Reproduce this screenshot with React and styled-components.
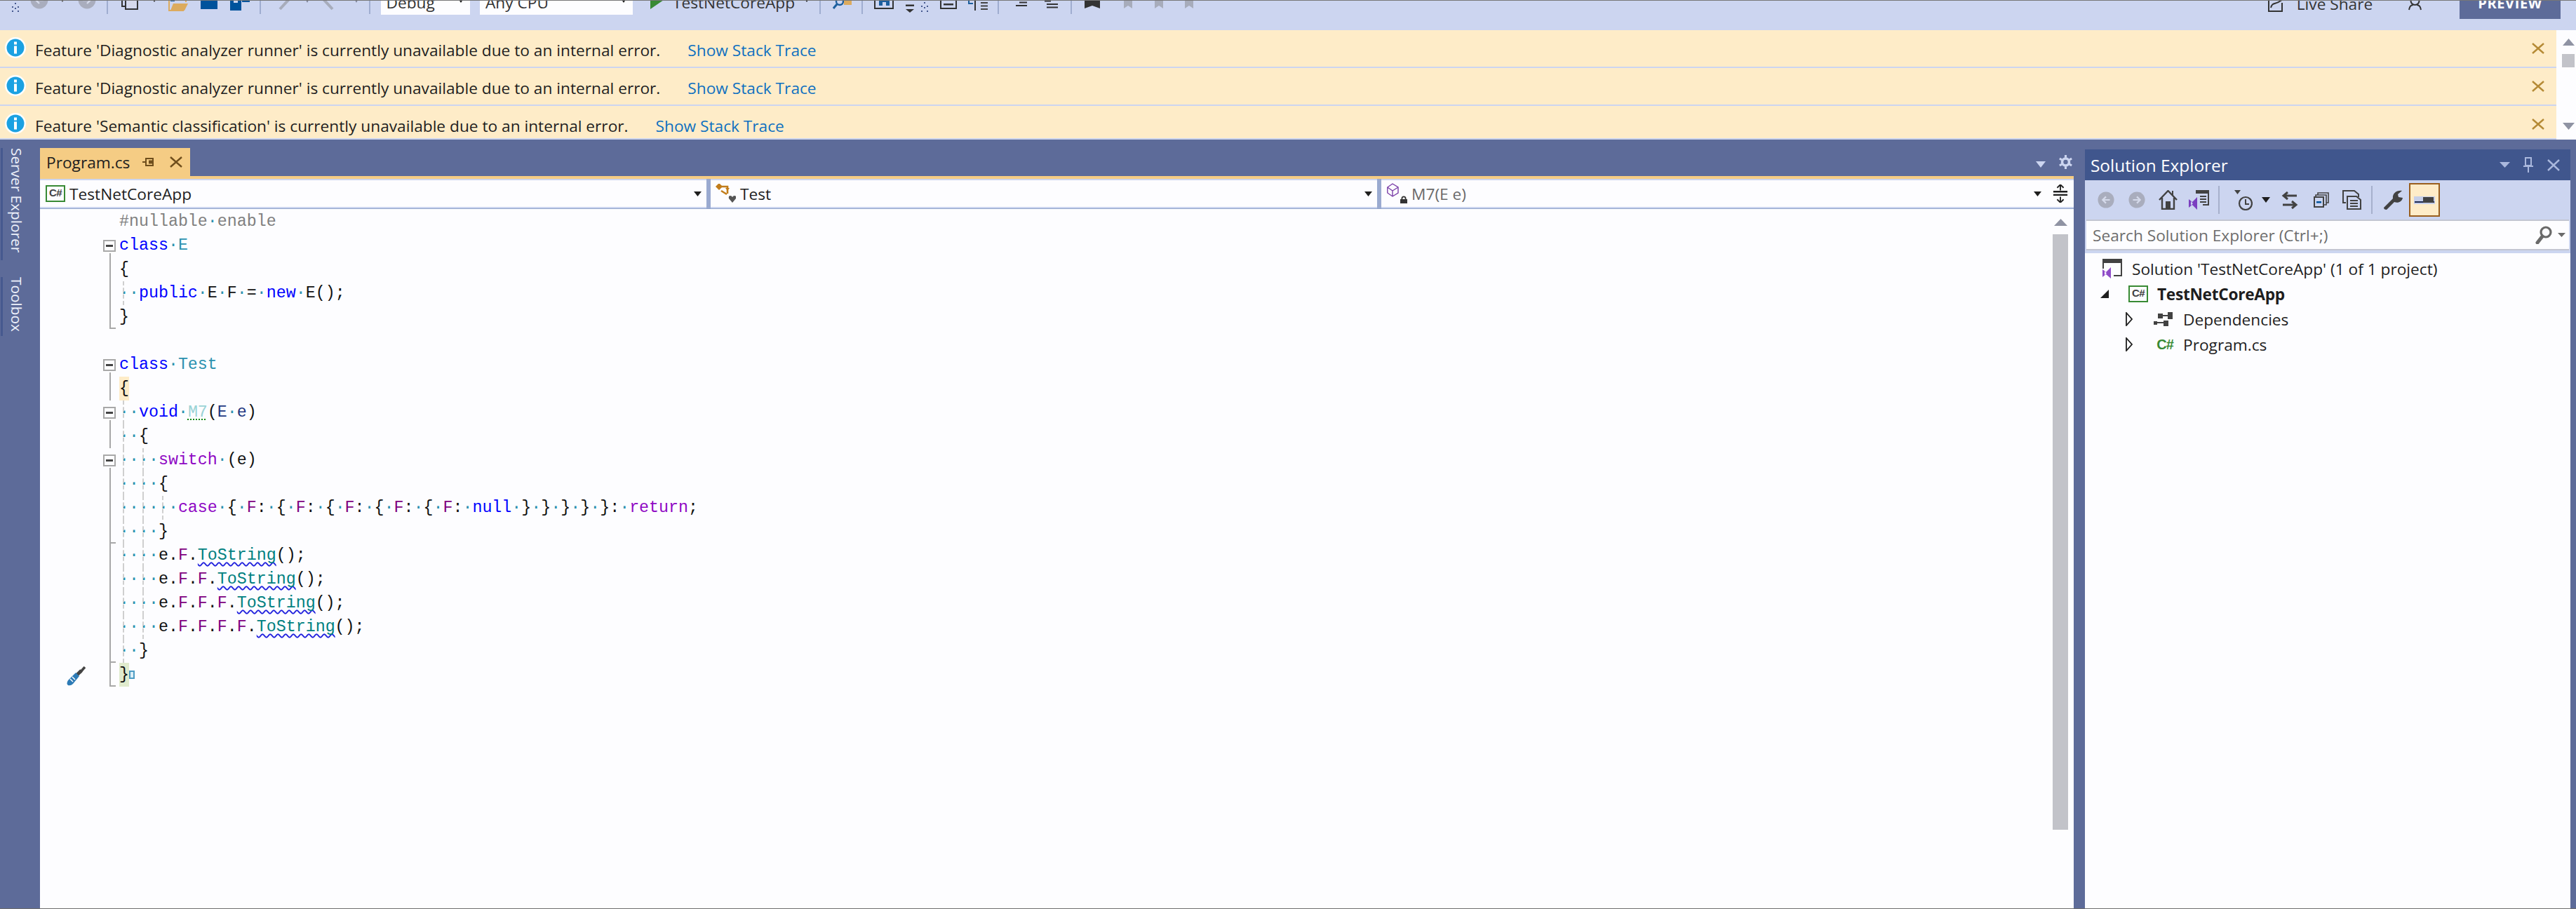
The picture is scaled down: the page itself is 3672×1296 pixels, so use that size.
import React from "react";
import styled, { createGlobalStyle } from "styled-components";

const UI_FONT = `"Open Sans", "Noto Sans", sans-serif`;
const DARK = "#5d6b99";
const LIGHT = "#ccd5f0";
const INFO = "#feecc8";
const PAGE = "#fdfdff";

const GlobalStyle = createGlobalStyle`
  html, body { margin: 0; padding: 0; background: ${PAGE}; overflow: hidden; }
  * { box-sizing: border-box; }
`;

const Root = styled.div`
  width: 3672px;
  height: 1296px;
  display: flex;
  flex-direction: column;
  overflow: hidden;
  font-family: ${UI_FONT};
  font-size: 22.7px;
  color: #1e1e1e;
  border-bottom: 1px solid #6d6d6d;
`;

/* ---------- top toolbar, cut off by the top of the shot ---------- */
const Toolbar = styled.div`
  height: 43px;
  flex: none;
  background: ${LIGHT};
  border-top: 1px solid #777;
  overflow: hidden;
`;
const ToolRow = styled.div`
  height: 42px;
  margin-top: -22px;
  display: flex;
  align-items: center;
`;
const Slot = styled.div`
  flex: none;
  width: ${(p) => p.$w}px;
  margin-left: ${(p) => p.$gap}px;
  display: flex;
  justify-content: center;
  align-items: center;
`;
const ToolSep = styled.div`
  width: 2px;
  height: 40px;
  background: #9fadd0;
`;
const ToolCombo = styled.div`
  width: ${(p) => p.$w}px;
  height: 42px;
  padding: 15px 9px 0 8px;
  background: #fdfdff;
  display: flex;
  align-items: flex-start;
  justify-content: space-between;
  line-height: 20px;
  color: #333;
`;
const ComboCaret = styled.div`
  margin-top: 4px;
  display: flex;
`;
const ToolText = styled.div`
  padding-top: ${(p) => p.$top}px;
  line-height: 20px;
  white-space: nowrap;
  color: #333;
`;
const PreviewBadge = styled.div`
  width: 144px;
  height: 54px;
  padding-top: 22px;
  background: ${DARK};
  color: #fff;
  font-weight: 700;
  letter-spacing: 0.6px;
  font-size: 20px;
  text-align: center;
  line-height: 20px;
`;

/* ---------- info bars ---------- */
const InfoArea = styled.div`
  height: 156px;
  flex: none;
  display: flex;
  background: ${PAGE};
`;
const InfoList = styled.div`
  flex: 1;
  display: flex;
  flex-direction: column;
`;
const InfoRow = styled.div`
  height: ${(p) => p.$h}px;
  flex: none;
  background: ${INFO};
  border-bottom: 2px solid ${LIGHT};
  display: flex;
  align-items: flex-start;
  padding: 10px 16px 0 7px;
`;
const InfoText = styled.div`
  margin-left: 13px;
  margin-top: 6px;
  line-height: 26px;
  white-space: nowrap;
`;
const InfoLink = styled.span`
  margin-left: 39px;
  margin-top: 6px;
  line-height: 26px;
  color: #0e70c0;
  white-space: nowrap;
`;
const InfoClose = styled.div`
  margin-left: auto;
  margin-top: 8px;
  display: flex;
`;
const MiniScroll = styled.div`
  width: 28px;
  flex: none;
  padding: 12px 2px 0 8px;
  display: flex;
  flex-direction: column;
  align-items: center;
`;
const MiniThumb = styled.div`
  width: 18px;
  height: 19px;
  margin: 12px 0 79px;
  background: #c2c3c9;
`;

/* ---------- workspace ---------- */
const Workspace = styled.div`
  flex: 1;
  min-height: 0;
  display: flex;
  background: ${DARK};
`;
const SideRail = styled.div`
  width: 57px;
  flex: none;
  padding-top: 12px;
  display: flex;
  flex-direction: column;
  align-items: flex-start;
  gap: 24px;
`;
const RailTab = styled.div`
  writing-mode: vertical-rl;
  height: ${(p) => p.$h}px;
  margin-left: 1px;
  border-left: 3px solid #46598f;
  padding-left: 7px;
  color: #eef1fb;
  font-size: 20.8px;
  line-height: 26px;
  white-space: nowrap;
`;
const EditorPanel = styled.div`
  width: 2899px;
  flex: none;
  padding-top: 12px;
  display: flex;
  flex-direction: column;
`;
const TabStrip = styled.div`
  height: 40px;
  flex: none;
  display: flex;
  align-items: stretch;
`;
const DocTab = styled.div`
  width: 214px;
  background: #f5cc84;
  padding-left: 9px;
  display: flex;
  align-items: center;
  color: #1e1e1e;
`;
const DocName = styled.span`
  width: 137px;
`;
const TabClose = styled.div`
  margin-left: 22px;
  display: flex;
`;
const TabTools = styled.div`
  margin-left: auto;
  padding-right: 1px;
  display: flex;
  align-items: center;
  gap: 18px;
`;
const TabCaret = styled.div`
  margin-top: 6px;
  display: flex;
`;
const AccentStrip = styled.div`
  height: 4px;
  flex: none;
  background: #f5cc84;
`;
const NavBar = styled.div`
  height: 43px;
  flex: none;
  display: flex;
  background: ${LIGHT};
  border-bottom: 1px solid #8fa3c9;
`;
const NavCombo = styled.div`
  width: ${(p) => p.$w}px;
  flex: none;
  margin: 2px 0;
  padding: 0 7px 0 ${(p) => p.$pad}px;
  background: ${PAGE};
  display: flex;
  align-items: center;
  color: ${(p) => p.$muted ? "#6a6a6a" : "#1e1e1e"};
`;
const NavLabel = styled.span`
  margin-left: ${(p) => p.$gap}px;
  margin-right: auto;
`;
const NavSep = styled.div`
  width: 6px;
  flex: none;
  background: #9aaad0;
`;
const NavSplit = styled.div`
  flex: 1;
  margin: 2px 0;
  background: ${PAGE};
  display: flex;
  align-items: center;
  justify-content: center;
`;
const EditorBody = styled.div`
  flex: 1;
  min-height: 0;
  display: flex;
  background: ${PAGE};
`;
const CodeArea = styled.div`
  flex: 1;
  padding-top: 1px;
`;
const EditorScroll = styled.div`
  width: 39px;
  flex: none;
  padding: 14px 8px 0 9px;
  display: flex;
  flex-direction: column;
  align-items: center;
`;
const EditorThumb = styled.div`
  width: 22px;
  height: 849px;
  margin-top: 12px;
  background: #c2c3c9;
`;

/* code lines */
const CodeLine = styled.div`
  height: 34px;
  display: flex;
  position: relative;
`;
const GlyphCell = styled.div`
  width: 90px;
  flex: none;
  display: flex;
  justify-content: flex-end;
  padding: 5px 25px 0 0;
`;
const FoldCell = styled.div`
  width: 23px;
  flex: none;
  position: relative;
`;
const FoldBox = styled.div`
  position: absolute;
  left: 0;
  top: 9px;
  width: 18px;
  height: 17px;
  border: 2px solid #a8a8a8;
  background: ${PAGE};
  &::after {
    content: "";
    position: absolute;
    left: 2px;
    right: 2px;
    top: 5px;
    height: 3px;
    background: #444;
  }
`;
const FoldLine = styled.div`
  position: absolute;
  left: 9px;
  top: ${(p) => p.$top}px;
  bottom: ${(p) => p.$bottom}px;
  width: 2px;
  background: #a8a8a8;
`;
const FoldFoot = styled.div`
  position: absolute;
  left: 9px;
  top: 32px;
  width: 9px;
  height: 2px;
  background: #a8a8a8;
`;
const CodeText = styled.div`
  font-family: "Liberation Mono", monospace;
  font-size: 23.3px;
  line-height: 34px;
  white-space: pre;
  color: #111;
`;
const GuideMark = styled.div`
  position: absolute;
  left: ${(p) => 118 + p.$col * 14}px;
  top: 0;
  height: 34px;
  border-left: 2px dashed #cfcfcf;
`;
const TOKEN_COLORS = {
  k: "#0000ff",
  c: "#8f08c4",
  t: "#2b91af",
  d: "#2b91af",
  g: "#808080",
  p: "#800080",
  m: "#008080",
  a: "#1f377f",
  f: "#9bd3d6",
  x: "#111111",
};
const Tok = styled.span`
  color: ${(p) => TOKEN_COLORS[p.$k]};
  ${(p) => p.$wavy ? "text-decoration: underline wavy #2222dd 1.5px; text-underline-offset: 3px; text-decoration-skip-ink: none;" : ""}
  ${(p) => p.$k === "f" ? "text-decoration: underline dotted #118811 2px; text-underline-offset: 3px; text-decoration-skip-ink: none;" : ""}
`;
const BraceMark = styled.span`
  display: inline-block;
  height: 34px;
  background: ${(p) => p.$bg};
`;
const EndMark = styled.span`
  display: inline-block;
  width: 8px;
  height: 12px;
  vertical-align: 0;
  border: 2px solid #4d9cc4;
  background: #dceef6;
`;

/* ---------- solution explorer ---------- */
const SolutionPanel = styled.div`
  width: 692px;
  flex: none;
  margin: 14px 8px 0 16px;
  display: flex;
  flex-direction: column;
  background: ${PAGE};
`;
const PanelTitle = styled.div`
  height: 44px;
  flex: none;
  background: #40568d;
  color: #fff;
  display: flex;
  align-items: center;
  padding: 0 14px 0 8px;
  font-size: 24.4px;
`;
const TitleTools = styled.div`
  margin-left: auto;
  display: flex;
  align-items: center;
  gap: 19px;
`;
const PanelBar = styled.div`
  height: 56px;
  flex: none;
  background: ${LIGHT};
  display: flex;
  align-items: center;
`;
const BarSep = styled.div`
  width: 2px;
  height: 40px;
  background: #a6b0cc;
`;
const ActiveTool = styled.div`
  width: 44px;
  height: 48px;
  border: 2px solid #9a5f1e;
  background: ${INFO};
  display: flex;
  align-items: center;
  justify-content: center;
`;
const SearchWrap = styled.div`
  height: 48px;
  flex: none;
  background: ${LIGHT};
  padding: 0 2px 4px;
`;
const SearchBox = styled.div`
  height: 44px;
  background: ${PAGE};
  border-top: 2px solid #c3c6d2;
  border-bottom: 2px solid #c3c6d2;
  display: flex;
  align-items: center;
  padding: 0 5px 0 9px;
  color: #6d6d6d;
`;
const SearchIcons = styled.div`
  margin-left: auto;
  display: flex;
  align-items: center;
  gap: 7px;
`;
const Tree = styled.div`
  padding-top: 4px;
  display: flex;
  flex-direction: column;
`;
const TreeRow = styled.div`
  height: 36px;
  display: flex;
  align-items: center;
  padding-left: ${(p) => p.$pad}px;
  font-weight: ${(p) => p.$bold ? 700 : 400};
  letter-spacing: ${(p) => p.$bold ? "-0.3px" : "0"};
  white-space: nowrap;
`;
const TreeIcon = styled.div`
  width: ${(p) => p.$w}px;
  margin-left: ${(p) => p.$gap || 0}px;
  flex: none;
  display: flex;
  align-items: center;
  justify-content: center;
`;
const TreeLabel = styled.span`
  margin-left: ${(p) => p.$gap}px;
`;
const CsBox = styled.div`
  width: ${(p) => p.$size}px;
  margin-left: ${(p) => p.$gap || 0}px;
  height: 24px;
  flex: none;
  border: 2px solid #388a34;
  background: ${PAGE};
  color: #424242;
  font-family: "Liberation Sans", sans-serif;
  font-size: 15px;
  font-weight: 700;
  letter-spacing: -0.5px;
  line-height: 18px;
  text-align: center;
`;
const CsPlain = styled.span`
  color: #388a34;
  font-family: "Liberation Sans", sans-serif;
  font-size: 20px;
  font-weight: 700;
  letter-spacing: -1px;
`;

/* ---------- icons ---------- */
const CloseX = ({ color = "#b58a35", w = 20, h = 16 }) => (
  <svg width={w} height={h} viewBox="0 0 20 16" preserveAspectRatio="none">
    <path d="M2 1 L18 15 M18 1 L2 15" stroke={color} strokeWidth="2.4" fill="none" />
  </svg>
);
const InfoIcon = () => (
  <svg width="30" height="30" viewBox="0 0 30 30">
    <circle cx="15" cy="15" r="15" fill="#fff" />
    <circle cx="15" cy="15" r="12.5" fill="#1ba1e2" />
    <rect x="13" y="12.5" width="4" height="11" fill="#fff" />
    <rect x="13" y="6.5" width="4" height="4" fill="#fff" />
  </svg>
);
const Caret = ({ dir = "down", color = "#1e1e1e", w = 12, h = 8 }) => (
  <svg width={w} height={h} viewBox="0 0 12 8" preserveAspectRatio="none">
    <path d={dir === "down" ? "M0 0 H12 L6 8 Z" : "M0 8 H12 L6 0 Z"} fill={color} />
  </svg>
);
const NavCircle = ({ flip, size = 26, color = "#a9adbd" }) => (
  <svg width={size} height={size} viewBox="0 0 26 26">
    <circle cx="13" cy="13" r="12.5" fill={color} />
    <path d={flip ? "M7 13h11M13 8l5 5-5 5" : "M19 13H8M13 8l-5 5 5 5"} stroke="#d5daea" strokeWidth="2.4" fill="none" />
  </svg>
);

// toolbar drawings: the row is centred on y=0, so the viewBox uses screen y directly
const TB = ({ w, children }) => (
  <svg width={w} height="42" viewBox={`0 -21 ${w} 42`}>{children}</svg>
);
const Grip = () => (
  <TB w={10}><path d="M4 4h2v2H4zM0 9h2v2H0zM8 9h2v2H8zM4 11h2v2H4zM0 15h2v2H0zM8 15h2v2H8z" fill="#46598f" /></TB>
);
const NewDoc = () => (
  <TB w={24}>
    <rect x="6" y="-8" width="17" height="21" fill={LIGHT} stroke="#333" strokeWidth="2" />
    <rect x="8" y="-6" width="13" height="17" fill="#d5d9ec" />
    <path d="M1 -6V9H5" stroke="#333" strokeWidth="2" fill="none" />
  </TB>
);
const Folder = () => (
  <TB w={28}>
    <path d="M1 -4V15H22" stroke="#dcab5e" strokeWidth="2" fill="none" />
    <path d="M25 -4V3" stroke="#dcab5e" strokeWidth="2" />
    <path d="M3 -2h6v4H3z" fill="#1c5f9e" />
    <path d="M3 15 7 5H28L23 15Z" fill="#dcab5e" />
  </TB>
);
const Save = () => (
  <TB w={24}><rect x="0" y="-14" width="24" height="27" fill="#00539c" /></TB>
);
const SaveAll = () => (
  <TB w={28}>
    <rect x="0" y="-14" width="16" height="29" fill="#00539c" />
    <rect x="17" y="-14" width="11" height="17" fill="#00539c" />
    <rect x="5" y="-2" width="6" height="6" fill={LIGHT} />
  </TB>
);
const ArrowLine = ({ flip }) => (
  <TB w={16}>
    <path d={flip ? "M15 -1 L2 13" : "M1 -1 L14 13"} stroke="#a7acbb" strokeWidth="4" fill="none" />
  </TB>
);
const Play = () => (
  <TB w={19}><path d="M0 -14 L19 0 L0 13Z" fill="#388a34" /></TB>
);
const FindIcon = () => (
  <TB w={28}>
    <circle cx="10" cy="2" r="5" stroke="#1c5f9e" strokeWidth="2.4" fill="none" />
    <path d="M6 6 L1 12" stroke="#1c5f9e" strokeWidth="3" />
    <rect x="16" y="1" width="11" height="6" fill="#dcab5e" />
  </TB>
);
const BoxTool = () => (
  <TB w={28}>
    <path d="M1 -10V12H27V-10" stroke="#333" strokeWidth="2" fill="none" />
    <path d="M7 -10H22V8H17V3H12V8H7Z" fill="#1c5f9e" />
  </TB>
);
const MinusDown = () => (
  <TB w={12}>
    <rect x="0" y="6.5" width="12" height="2.5" fill="#333" />
    <path d="M0 13h12l-6 5z" fill="#333" />
  </TB>
);
const Dots = () => (
  <TB w={10}><path d="M4 3h2v2H4zM0 8h2v2H0zM8 8h2v2H8zM4 10h2v2H4zM0 15h2v2H0zM8 15h2v2H8z" fill="#46598f" /></TB>
);
const BoxMinus = () => (
  <TB w={24}>
    <path d="M1 -10V12H23V-10" stroke="#333" strokeWidth="2" fill="none" />
    <rect x="5" y="5" width="14" height="2.5" fill="#333" />
  </TB>
);
const OutlineList = () => (
  <TB w={28}>
    <path d="M1 -5V5H7" stroke="#1c5f9e" strokeWidth="2.2" fill="none" />
    <path d="M10 -5V15" stroke="#333" strokeWidth="2" />
    <path d="M18 4H28M18 8.5H28M18 13H28" stroke="#444" strokeWidth="2" />
  </TB>
);
const IndentLeft = () => (
  <TB w={16}><path d="M5 3.5H16M0 8H16" stroke="#333" strokeWidth="2.2" /></TB>
);
const IndentRight = () => (
  <TB w={19}><path d="M0 1.5H9M3 6H19M3 10.5H19" stroke="#333" strokeWidth="2.2" /></TB>
);
const Bookmark = ({ color, w }) => (
  <TB w={w}><path d={`M0 -14H${w}V12L${w / 2} 8 0 12Z`} fill={color} /></TB>
);
const ShareIcon = () => (
  <TB w={24}>
    <path d="M1 -4V16H20V4" stroke="#333" strokeWidth="2" fill="none" />
    <path d="M4 11 C7 1 11 9 23 -3" stroke="#333" strokeWidth="2" fill="none" />
  </TB>
);
const PersonIcon = () => (
  <TB w={19}>
    <circle cx="9.5" cy="1" r="6" stroke="#333" strokeWidth="2" fill="none" />
    <path d="M1 14 Q2 7 7 7 M18 14 Q17 7 12 7" stroke="#333" strokeWidth="2" fill="none" />
  </TB>
);

const PinSide = () => (
  <svg width="16" height="14" viewBox="0 0 16 14">
    <path d="M0 7h5M5 1v12M5 2h10v10H5" stroke="#6f4e1c" strokeWidth="2" fill="none" />
    <rect x="9" y="4.5" width="6" height="5" fill="#6f4e1c" />
  </svg>
);
const PinUp = () => (
  <svg width="14" height="22" viewBox="0 0 14 22">
    <path d="M3 1h8v11H3zM0 13h14M7 13v9" stroke="#aab8dd" strokeWidth="2" fill="none" />
  </svg>
);
const Gear = () => (
  <svg width="21" height="20" viewBox="0 0 22 22">
    <circle cx="11" cy="11" r="5.5" stroke={LIGHT} strokeWidth="4" fill="none" />
    <path d="M11 0v4M11 18v4M1.5 5.5l3.5 2M17 14.5l3.5 2M1.5 16.5l3.5-2M17 7.5l3.5-2" stroke={LIGHT} strokeWidth="3.4" />
  </svg>
);
const SplitIcon = () => (
  <svg width="22" height="26" viewBox="0 0 24 28">
    <path d="M12 0v9M12 19v9M7 5l5-5 5 5M7 23l5 5 5-5" stroke="#1e1e1e" strokeWidth="2" fill="none" />
    <path d="M1 11h22M1 16h22" stroke="#1e1e1e" strokeWidth="2.6" />
  </svg>
);
const MembersIcon = () => (
  <svg width="30" height="28" viewBox="0 0 30 28">
    <path d="M6 -1 11 4 6 9 1 4Z" fill="#c27d1a" />
    <path d="M8 4H18V14M9 10 17 15" stroke="#c27d1a" strokeWidth="2.6" fill="none" />
    <path d="M15 6h6l-3 4z" fill="#c27d1a" />
    <path d="M25 27 L20 21 Q19 17 22 17 Q24 17 25 19 Q26 17 28 17 Q31 17 30 21Z" fill="#555" />
  </svg>
);
const MethodIcon = () => (
  <svg width="34" height="40" viewBox="0 0 34 40">
    <path d="M8 6 16 11V19L8 24 0.8 19V11Z M0.8 11 8 16 16 11 M8 16V24" stroke="#7b3fa8" strokeWidth="1.4" fill="none" />
    <path d="M20.5 27a3.5 3.5 0 0 1 7 0v2h-1.8v-2a1.7 1.7 0 0 0-3.4 0v2h-1.8z" fill="#333" />
    <rect x="19" y="28" width="10" height="6" fill="#333" />
  </svg>
);
const Screwdriver = () => (
  <svg width="28" height="28" viewBox="0 0 28 28">
    <path d="M27 1 L20 9" stroke="#444" strokeWidth="3.6" />
    <path d="M22 6 L15 13" stroke="#444" strokeWidth="5" />
    <path d="M14 9 L3 20 Q0 25 3 27 Q7 28 10 25 L19 14Z" fill="#2d7bb6" />
    <path d="M6 18l4 4M9 15l4 4" stroke="#fff" strokeWidth="1.5" />
  </svg>
);
const HomeIcon = () => (
  <svg width="27" height="28" viewBox="0 0 27 28">
    <path d="M1 14 13.5 1 26 14M5 11v16h17V11" stroke="#424242" strokeWidth="2.4" fill="none" />
    <rect x="10" y="16" width="7" height="11" fill="#424242" />
    <path d="M20 1v7" stroke="#424242" strokeWidth="2" />
  </svg>
);
const VsDocIcon = () => (
  <svg width="29" height="28" viewBox="0 0 29 28">
    <path d="M10 1h18v20H20" stroke="#424242" strokeWidth="2" fill="none" />
    <rect x="10" y="0" width="18" height="5" fill="#424242" />
    <path d="M16 9h9M16 13h9M16 17h9" stroke="#424242" strokeWidth="2" />
    <path d="M0 13l5 4 7-7v18l-7-7-5 4z M3 16v6l3-3z" fill="#7b3fc0" fillRule="evenodd" />
  </svg>
);
const HistoryIcon = () => (
  <svg width="26" height="29" viewBox="0 0 26 29">
    <path d="M0 0h9L4.500 6z" fill="#424242" />
    <circle cx="16" cy="19" r="9" stroke="#424242" strokeWidth="2.2" fill="none" />
    <path d="M16 13v7h5" stroke="#424242" strokeWidth="2" fill="none" />
  </svg>
);
const SyncIcon = () => (
  <svg width="25" height="25" viewBox="0 0 25 25">
    <path d="M22 6H4M9 1 3 6l6 5" stroke="#424242" strokeWidth="3" fill="none" />
    <path d="M2 19h18M15 14l6 5-6 5" stroke="#424242" strokeWidth="3" fill="none" />
  </svg>
);
const CollapseIcon = () => (
  <svg width="22" height="22" viewBox="0 0 22 22">
    <path d="M6 4V1h15v14h-3M3 7V4h15v14h-3" stroke="#424242" strokeWidth="1.6" fill="none" />
    <rect x="1" y="7" width="13" height="14" stroke="#424242" strokeWidth="2" fill={LIGHT} />
    <rect x="4" y="13" width="7" height="2.5" fill="#00539c" />
  </svg>
);
const CopyIcon = () => (
  <svg width="27" height="28" viewBox="0 0 27 28">
    <path d="M5 18H1V1h16l6 5v4" stroke="#424242" strokeWidth="2" fill="none" />
    <path d="M7 9h13l6 5v13H7z" stroke="#424242" strokeWidth="2" fill={LIGHT} />
    <path d="M11 15h11M11 19h11M11 23h11" stroke="#424242" strokeWidth="2" />
  </svg>
);
const WrenchIcon = () => (
  <svg width="28" height="28" viewBox="0 0 28 28">
    <path d="M0 25 13 12C12 5 18 0 26 1L20 6l1 4 6 1C26 17 20 19 15 17L4 28Q0 28 0 25Z" fill="#424242" />
  </svg>
);
const SyncedIcon = () => (
  <svg width="30" height="11" viewBox="0 0 30 11">
    <rect x="0" y="0" width="30" height="11" fill="#c6cfe9" />
    <rect x="1" y="7" width="28" height="2" fill="#1e2a50" />
    <rect x="13" y="1" width="15" height="8" fill="#424242" />
  </svg>
);
const Magnifier = () => (
  <svg width="25" height="26" viewBox="0 0 25 26">
    <circle cx="15" cy="9" r="7" stroke="#6a6a6a" strokeWidth="3.2" fill="none" />
    <path d="M10 15 3 24" stroke="#6a6a6a" strokeWidth="5" strokeLinecap="round" />
  </svg>
);
const SolutionIcon = () => (
  <svg width="28" height="28" viewBox="0 0 28 28">
    <path d="M1 2h26v22H16" stroke="#424242" strokeWidth="2" fill="none" />
    <rect x="0" y="0" width="28" height="6" fill="#424242" />
    <path d="M1 6v8" stroke="#424242" strokeWidth="2" />
    <path d="M0 15l5 4 7-7v16l-7-6-5 4z M3 18v5l3-2.500z" fill="#8f4cc8" fillRule="evenodd" />
  </svg>
);
const TreeArrow = ({ open }) => open ? (
  <svg width="12" height="12" viewBox="0 0 12 12"><path d="M12 0V12H0Z" fill="#1e1e1e" /></svg>
) : (
  <svg width="10" height="20" viewBox="0 0 10 20"><path d="M1 1 9 10 1 19Z" stroke="#1e1e1e" strokeWidth="1.8" fill="none" /></svg>
);
const DependencyIcon = () => (
  <svg width="28" height="20" viewBox="0 0 28 20">
    <path d="M6 2h7v7H6zM20 0h7v10h-7zM0 13h5v5H0zM14 12h7v8h-7z" fill="#424242" />
    <path d="M13 5h7M5 15h9" stroke="#424242" strokeWidth="2" />
  </svg>
);

/* gives each item the left gap that puts its centre on a given x */
const layoutByCentre = (items, start = 0) => {
  let cursor = start;
  return items.map(([centre, width, node]) => {
    const gap = centre - width / 2 - cursor;
    cursor = centre + width / 2;
    return { width, gap, node };
  });
};

const toolItems = [
  [22, 10, <Grip />],
  [56, 26, <NavCircle />],
  [89, 8, <Caret w={8} h={6} color="#555" />],
  [124, 26, <NavCircle flip />],
  [153, 2, <ToolSep />],
  [185, 24, <NewDoc />],
  [220, 8, <Caret w={8} h={6} color="#333" />],
  [254, 28, <Folder />],
  [298, 24, <Save />],
  [342, 28, <SaveAll />],
  [371, 2, <ToolSep />],
  [405, 16, <ArrowLine flip />],
  [438, 8, <Caret w={8} h={8} color="#7d8396" />],
  [468, 16, <ArrowLine />],
  [508, 8, <Caret w={8} h={8} color="#7d8396" />],
  [527, 2, <ToolSep />],
  [606, 127, <ToolCombo $w={127}><span>Debug</span><ComboCaret><Caret w={8} h={6} /></ComboCaret></ToolCombo>],
  [793, 218, <ToolCombo $w={218}><span>Any CPU</span><ComboCaret><Caret w={8} h={6} /></ComboCaret></ToolCombo>],
  [936, 19, <Play />],
  [1046, 176, <ToolText $top={7}>TestNetCoreApp</ToolText>],
  [1150, 8, <Caret w={8} h={6} />],
  [1169, 2, <ToolSep />],
  [1201, 28, <FindIcon />],
  [1229, 2, <ToolSep />],
  [1260, 28, <BoxTool />],
  [1297, 12, <MinusDown />],
  [1318, 10, <Dots />],
  [1352, 24, <BoxMinus />],
  [1394, 28, <OutlineList />],
  [1423, 2, <ToolSep />],
  [1456, 16, <IndentLeft />],
  [1498.5, 19, <IndentRight />],
  [1527, 2, <ToolSep />],
  [1557, 22, <Bookmark color="#333" w={22} />],
  [1608, 12, <Bookmark color="#a7acbb" w={12} />],
  [1652, 12, <Bookmark color="#a7acbb" w={12} />],
  [1695, 12, <Bookmark color="#a7acbb" w={12} />],
  [3245, 24, <ShareIcon />],
  [3328, 110, <ToolText $top={12}>Live Share</ToolText>],
  [3442.5, 19, <PersonIcon />],
  [3578, 144, <PreviewBadge>PREVIEW</PreviewBadge>],
];

const PANEL_LEFT = 2972;
const panelItems = [
  [3002, 24, <NavCircle size={24} />],
  [3046, 24, <NavCircle flip size={24} />],
  [3090, 27, <HomeIcon />],
  [3134, 29, <VsDocIcon />],
  [3163, 2, <BarSep />],
  [3198, 26, <HistoryIcon />],
  [3230, 12, <Caret />],
  [3264, 25, <SyncIcon />],
  [3309, 22, <CollapseIcon />],
  [3352, 27, <CopyIcon />],
  [3381, 2, <BarSep />],
  [3412, 28, <WrenchIcon />],
  [3456, 44, <ActiveTool><SyncedIcon /></ActiveTool>],
];

const infoBars = [
  { h: 54, text: "Feature 'Diagnostic analyzer runner' is currently unavailable due to an internal error." },
  { h: 54, text: "Feature 'Diagnostic analyzer runner' is currently unavailable due to an internal error." },
  { h: 48, text: "Feature 'Semantic classification' is currently unavailable due to an internal error." },
];

const dots = (n) => "·".repeat(n);
const eLine = (depth) => {
  const parts = [["d", dots(4)], ["x", "e."]];
  for (let i = 0; i < depth; i++) parts.push(["p", "F"], ["x", "."]);
  parts.push(["m", "ToString", true], ["x", "();"]);
  return parts;
};
const caseParts = [["d", dots(6)], ["c", "case"], ["d", "·"]];
for (let i = 0; i < 5; i++) caseParts.push(["x", "{"], ["d", "·"], ["p", "F"], ["x", ":"], ["d", "·"]);
caseParts.push(["k", "null"], ["d", "·"]);
for (let i = 0; i < 4; i++) caseParts.push(["x", "}"], ["d", "·"]);
caseParts.push(["x", "}:"], ["d", "·"], ["c", "return"], ["x", ";"]);

// fold: box = collapse square, line = running bar, end = bar stopping in a foot, tick = bar with a foot
const codeLines = [
  { parts: [["g", "#nullable"], ["d", "·"], ["g", "enable"]] },
  { fold: "box", parts: [["k", "class"], ["d", "·"], ["t", "E"]] },
  { fold: "line", parts: [["x", "{"]] },
  { fold: "line", guides: [0], parts: [["d", "··"], ["k", "public"], ["d", "·"], ["x", "E"], ["d", "·"], ["x", "F"], ["d", "·"], ["x", "="], ["d", "·"], ["k", "new"], ["d", "·"], ["x", "E();"]] },
  { fold: "end", parts: [["x", "}"]] },
  { parts: [] },
  { fold: "box", parts: [["k", "class"], ["d", "·"], ["t", "Test"]] },
  { fold: "line", mark: "#feecc8", parts: [["x", "{"]] },
  { fold: "box", guides: [0], parts: [["d", "··"], ["k", "void"], ["d", "·"], ["f", "M7"], ["x", "("], ["a", "E"], ["d", "·"], ["a", "e"], ["x", ")"]] },
  { fold: "line", guides: [0], parts: [["d", "··"], ["x", "{"]] },
  { fold: "box", guides: [0, 2], parts: [["d", dots(4)], ["c", "switch"], ["d", "·"], ["x", "(e)"]] },
  { fold: "line", guides: [0, 2], parts: [["d", dots(4)], ["x", "{"]] },
  { fold: "line", guides: [0, 2, 4], parts: caseParts },
  { fold: "tick", guides: [0, 2], parts: [["d", dots(4)], ["x", "}"]] },
  { fold: "line", guides: [0, 2], parts: eLine(1) },
  { fold: "line", guides: [0, 2], parts: eLine(2) },
  { fold: "line", guides: [0, 2], parts: eLine(3) },
  { fold: "line", guides: [0, 2], parts: eLine(4) },
  { fold: "tick", guides: [0], parts: [["d", "··"], ["x", "}"]] },
  { fold: "end", mark: "#e0ebcd", glyph: true, end: true, parts: [["x", "}"]] },
];

const FoldMark = ({ kind }) => {
  if (kind === "box") return (
    <>
      <FoldLine $top={28} $bottom={0} />
      <FoldBox />
    </>
  );
  if (kind === "line") return <FoldLine $top={0} $bottom={0} />;
  if (kind === "end") return (
    <>
      <FoldLine $top={0} $bottom={0} />
      <FoldFoot />
    </>
  );
  if (kind === "tick") return (
    <>
      <FoldLine $top={0} $bottom={0} />
      <FoldFoot />
    </>
  );
  return null;
};

const Line = ({ line }) => (
  <CodeLine>
    <GlyphCell>{line.glyph && <Screwdriver />}</GlyphCell>
    <FoldCell><FoldMark kind={line.fold} /></FoldCell>
    <CodeText>
      {line.mark
        ? <BraceMark $bg={line.mark}>{line.parts[0][1]}</BraceMark>
        : line.parts.map(([k, t, wavy], i) => <Tok key={i} $k={k} $wavy={wavy}>{t}</Tok>)}
      {line.end && <EndMark />}
    </CodeText>
    {(line.guides || []).map((g) => <GuideMark key={g} $col={g} />)}
  </CodeLine>
);

export default function App() {
  return (
    <Root>
      <GlobalStyle />
      <Toolbar>
        <ToolRow>
          {layoutByCentre(toolItems).map((it, i) => (
            <Slot key={i} $w={it.width} $gap={it.gap}>{it.node}</Slot>
          ))}
        </ToolRow>
      </Toolbar>

      <InfoArea>
        <InfoList>
          {infoBars.map((bar, i) => (
            <InfoRow key={i} $h={bar.h}>
              <InfoIcon />
              <InfoText>{bar.text}</InfoText>
              <InfoLink>Show Stack Trace</InfoLink>
              <InfoClose><CloseX /></InfoClose>
            </InfoRow>
          ))}
        </InfoList>
        <MiniScroll>
          <Caret dir="up" color="#8f93a3" w={17} h={10} />
          <MiniThumb />
          <Caret color="#8f93a3" w={17} h={10} />
        </MiniScroll>
      </InfoArea>

      <Workspace>
        <SideRail>
          <RailTab $h={160}>Server Explorer</RailTab>
          <RailTab $h={84}>Toolbox</RailTab>
        </SideRail>

        <EditorPanel>
          <TabStrip>
            <DocTab>
              <DocName>Program.cs</DocName>
              <PinSide />
              <TabClose><CloseX color="#6f4e1c" /></TabClose>
            </DocTab>
            <TabTools>
              <TabCaret><Caret color={LIGHT} w={14} h={9} /></TabCaret>
              <Gear />
            </TabTools>
          </TabStrip>
          <AccentStrip />
          <NavBar>
            <NavCombo $w={950} $pad={8}>
              <CsBox $size={28}>C#</CsBox>
              <NavLabel $gap={6}>TestNetCoreApp</NavLabel>
              <Caret w={11} h={7} />
            </NavCombo>
            <NavSep />
            <NavCombo $w={950} $pad={6}>
              <MembersIcon />
              <NavLabel $gap={6}>Test</NavLabel>
              <Caret w={11} h={7} />
            </NavCombo>
            <NavSep />
            <NavCombo $w={948} $pad={8} $muted>
              <MethodIcon />
              <NavLabel $gap={1}>M7(E e)</NavLabel>
              <Caret w={11} h={7} />
            </NavCombo>
            <NavSplit><SplitIcon /></NavSplit>
          </NavBar>
          <EditorBody>
            <CodeArea>
              {codeLines.map((line, i) => <Line key={i} line={line} />)}
            </CodeArea>
            <EditorScroll>
              <Caret dir="up" color="#8f93a3" w={19} h={10} />
              <EditorThumb />
            </EditorScroll>
          </EditorBody>
        </EditorPanel>

        <SolutionPanel>
          <PanelTitle>
            Solution Explorer
            <TitleTools>
              <Caret color="#aab8dd" w={15} h={8} />
              <PinUp />
              <CloseX color="#aab8dd" w={20} h={17} />
            </TitleTools>
          </PanelTitle>
          <PanelBar>
            {layoutByCentre(panelItems, PANEL_LEFT).map((it, i) => (
              <Slot key={i} $w={it.width} $gap={it.gap}>{it.node}</Slot>
            ))}
          </PanelBar>
          <SearchWrap>
            <SearchBox>
              Search Solution Explorer (Ctrl+;)
              <SearchIcons>
                <Magnifier />
                <Caret color="#6a6a6a" w={11} h={6} />
              </SearchIcons>
            </SearchBox>
          </SearchWrap>
          <Tree>
            <TreeRow $pad={25}>
              <SolutionIcon />
              <TreeLabel $gap={14}>Solution 'TestNetCoreApp' (1 of 1 project)</TreeLabel>
            </TreeRow>
            <TreeRow $pad={22} $bold>
              <TreeIcon $w={12}><TreeArrow open /></TreeIcon>
              <CsBox $size={28} $gap={28}>C#</CsBox>
              <TreeLabel $gap={13}>TestNetCoreApp</TreeLabel>
            </TreeRow>
            <TreeRow $pad={58}>
              <TreeIcon $w={10}><TreeArrow /></TreeIcon>
              <TreeIcon $w={28} $gap={30}><DependencyIcon /></TreeIcon>
              <TreeLabel $gap={14}>Dependencies</TreeLabel>
            </TreeRow>
            <TreeRow $pad={58}>
              <TreeIcon $w={10}><TreeArrow /></TreeIcon>
              <TreeIcon $w={24} $gap={34}><CsPlain>C#</CsPlain></TreeIcon>
              <TreeLabel $gap={14}>Program.cs</TreeLabel>
            </TreeRow>
          </Tree>
        </SolutionPanel>
      </Workspace>
    </Root>
  );
}
